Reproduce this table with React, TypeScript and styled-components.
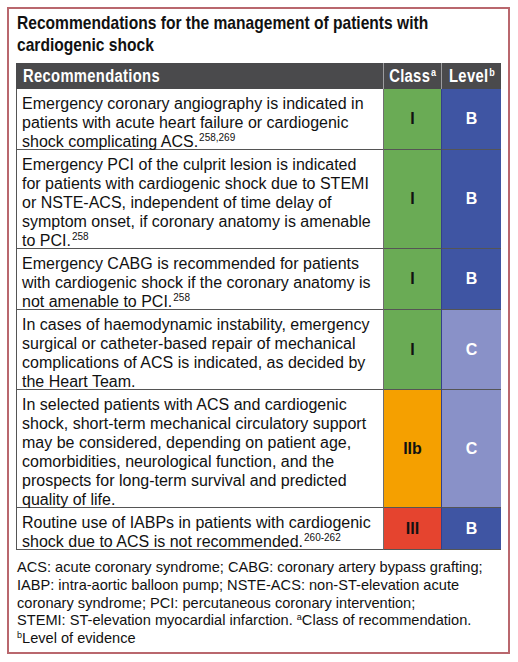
import React from 'react';
import styled, { createGlobalStyle } from 'styled-components';

// --- Types and data ---

type ClassOfRec = 'I' | 'IIb' | 'III';
type Level = 'B' | 'C';

interface Recommendation {
  lines: string[];
  refs?: string;
  cls: ClassOfRec;
  level: Level;
}

const classColors: Record<ClassOfRec, string> = {
  I: '#6aab55',
  IIb: '#f5a000',
  III: '#e5442f',
};

const levelColors: Record<Level, string> = {
  B: '#3f55a3',
  C: '#8991c8',
};

const recommendations: Recommendation[] = [
  {
    lines: [
      'Emergency coronary angiography is indicated in',
      'patients with acute heart failure or cardiogenic',
      'shock complicating ACS.',
    ],
    refs: '258,269',
    cls: 'I',
    level: 'B',
  },
  {
    lines: [
      'Emergency PCI of the culprit lesion is indicated',
      'for patients with cardiogenic shock due to STEMI',
      'or NSTE-ACS, independent of time delay of',
      'symptom onset, if coronary anatomy is amenable',
      'to PCI.',
    ],
    refs: '258',
    cls: 'I',
    level: 'B',
  },
  {
    lines: [
      'Emergency CABG is recommended for patients',
      'with cardiogenic shock if the coronary anatomy is',
      'not amenable to PCI.',
    ],
    refs: '258',
    cls: 'I',
    level: 'B',
  },
  {
    lines: [
      'In cases of haemodynamic instability, emergency',
      'surgical or catheter-based repair of mechanical',
      'complications of ACS is indicated, as decided by',
      'the Heart Team.',
    ],
    cls: 'I',
    level: 'C',
  },
  {
    lines: [
      'In selected patients with ACS and cardiogenic',
      'shock, short-term mechanical circulatory support',
      'may be considered, depending on patient age,',
      'comorbidities, neurological function, and the',
      'prospects for long-term survival and predicted',
      'quality of life.',
    ],
    cls: 'IIb',
    level: 'C',
  },
  {
    lines: [
      'Routine use of IABPs in patients with cardiogenic',
      'shock due to ACS is not recommended.',
    ],
    refs: '260-262',
    cls: 'III',
    level: 'B',
  },
];

const footnoteLines = [
  'ACS: acute coronary syndrome; CABG: coronary artery bypass grafting;',
  'IABP: intra-aortic balloon pump; NSTE-ACS: non-ST-elevation acute',
  'coronary syndrome; PCI: percutaneous coronary intervention;',
];

// --- Styles ---

const body = `"Liberation Sans", Arial, sans-serif`;

const GlobalStyle = createGlobalStyle`
  html, body {
    margin: 0;
    padding: 0;
    background: #ffffff;
  }
  body {
    font-family: ${body};
    color: #111;
  }
`;

// no narrow face installed, so squeeze the bold sans horizontally
const Condensed = styled.span<{ $origin?: string }>`
  display: inline-block;
  transform: scaleX(0.82);
  transform-origin: ${({ $origin }) => $origin || 'left center'};
  white-space: nowrap;
`;

const Frame = styled.section`
  box-sizing: border-box;
  width: 503px;
  height: 647px;
  margin: 7px 0 0 7px;
  padding: 3px 7px 0 7px;
  border: 2px solid #b9676d;
  background: #fff;
`;

const Title = styled.h2`
  margin: 0 0 7px 1px;
  font-family: ${body};
  font-size: 19px;
  line-height: 22px;
  font-weight: 700;
  color: #111;
  white-space: nowrap;
`;

const TitleLine = styled.div`
  height: 22px;
`;

const Table = styled.div`
  display: grid;
  grid-template-columns: 367px 58px 60px;
`;

const HeadCell = styled.div<{ $first?: boolean }>`
  box-sizing: border-box;
  height: 26px;
  display: flex;
  align-items: center;
  justify-content: ${({ $first }) => ($first ? 'flex-start' : 'center')};
  padding-left: ${({ $first }) => ($first ? '6px' : '0')};
  background: #4a4a4c;
  border-left: ${({ $first }) => ($first ? '1px solid #4a4a4c' : '1px solid #9c9c9e')};
  color: #fff;
  font-family: ${body};
  font-size: 18px;
  font-weight: 700;
  letter-spacing: 0.4px;
  white-space: nowrap;
`;

const HeadSup = styled.sup`
  font-size: 11px;
  line-height: 0;
  vertical-align: 6px;
  letter-spacing: 0;
  margin-left: 1px;
`;

const TextCell = styled.div`
  box-sizing: border-box;
  padding: 5px 5px 0 5px;
  border-left: 1px solid #555;
  border-bottom: 1px solid #555;
  font-family: ${body};
  font-size: 16px;
  line-height: 19px;
  color: #111;
  white-space: nowrap;
`;

const TextLines = styled.div`
  margin-bottom: -2px;
`;

const Line = styled.div``;

const Ref = styled.sup`
  font-size: 10px;
  line-height: 0;
  vertical-align: 6px;
  margin-left: 1px;
`;

const GradeCell = styled.div<{ $bg: string; $light?: boolean }>`
  box-sizing: border-box;
  display: flex;
  align-items: center;
  justify-content: center;
  background: ${({ $bg }) => $bg};
  border-left: 1px solid ${({ $light }) => ($light ? '#34408a' : '#6f6f6f')};
  border-bottom: 1px solid #555;
  color: ${({ $light }) => ($light ? '#fff' : '#111')};
  font-family: ${body};
  font-size: 16px;
  font-weight: 700;
`;

const Footnotes = styled.div`
  margin: 9px 0 0 1px;
  font-family: ${body};
  font-size: 14.6px;
  line-height: 17.8px;
  color: #111;
  white-space: nowrap;
`;

const NoteSup = styled.sup`
  font-size: 9px;
  line-height: 0;
  vertical-align: 5px;
`;

// --- Component ---

const App: React.FC = () => {
  return (
    <>
      <GlobalStyle />
      <Frame>
        <Title>
          <TitleLine>
            <Condensed>Recommendations for the management of patients with</Condensed>
          </TitleLine>
          <TitleLine>
            <Condensed>cardiogenic shock</Condensed>
          </TitleLine>
        </Title>

        <Table>
          <HeadCell $first>
            <Condensed>Recommendations</Condensed>
          </HeadCell>
          <HeadCell>
            <Condensed $origin="center">
              Class<HeadSup>a</HeadSup>
            </Condensed>
          </HeadCell>
          <HeadCell>
            <Condensed $origin="center">
              Level<HeadSup>b</HeadSup>
            </Condensed>
          </HeadCell>

          {recommendations.map((rec, i) => (
            <React.Fragment key={i}>
              <TextCell>
                <TextLines>
                  {rec.lines.map((line, j) => (
                    <Line key={j}>
                      {line}
                      {j === rec.lines.length - 1 && rec.refs && <Ref>{rec.refs}</Ref>}
                    </Line>
                  ))}
                </TextLines>
              </TextCell>
              <GradeCell $bg={classColors[rec.cls]}>{rec.cls}</GradeCell>
              <GradeCell $bg={levelColors[rec.level]} $light>
                {rec.level}
              </GradeCell>
            </React.Fragment>
          ))}
        </Table>

        <Footnotes>
          {footnoteLines.map((line, i) => (
            <Line key={i}>{line}</Line>
          ))}
          <Line>
            STEMI: ST-elevation myocardial infarction. <NoteSup>a</NoteSup>Class of recommendation.
          </Line>
          <Line>
            <NoteSup>b</NoteSup>Level of evidence
          </Line>
        </Footnotes>
      </Frame>
    </>
  );
};

export default App;
